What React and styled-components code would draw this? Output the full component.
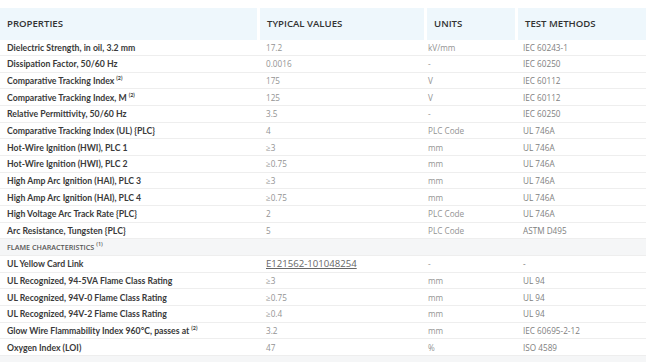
import React from 'react';
import styled, { createGlobalStyle } from 'styled-components';

const GlobalStyle = createGlobalStyle`
    body{
        margin: 0;
        background: #ffffff;
        font-family: "Open Sans", "Liberation Sans", sans-serif;
    }
`

const StyledSheet = styled.div`
    padding-top: 8px;
    width: 646px;
`

const Row = styled.div`
    display: grid;
    grid-template-columns: 257px 164px 88px 128px;
    column-gap: 3px;
    height: ${props => props.head ? '31.5px' : '16.67px'};
    align-items: center;
    background: ${props => props.head ? '#eef7fc' : props.section ? '#f5f6f7' : '#ffffff'};
    border-bottom: ${props => props.head ? 'none' : '1px solid #eeeeee'};
    box-sizing: border-box;
`

const HeadCell = styled.div`
    height: 100%;
    display: flex;
    align-items: center;
    padding-left: 7px;
    font-size: 9.6px;
    font-weight: 600;
    color: #333;
    background: #eef7fc;
    box-shadow: 3px 0 0 #ffffff;
`

const Prop = styled.div`
    padding-left: 7px;
    font-family: Lato, "Open Sans", sans-serif;
    font-size: 8.7px;
    font-weight: 700;
    color: #3a3a3a;
    white-space: nowrap;
    sup{
        font-size: 5.4px;
        margin-left: 2px;
        vertical-align: 4px;
        line-height: 0;
    }
`

const Section = styled(Prop)`
    font-family: "Open Sans", sans-serif;
    font-size: 7.2px;
    font-weight: 600;
    color: #555;
    grid-column: 1 / -1;
`

const Val = styled.div`
    padding-left: ${props => props.unit ? '1px' : props.method ? '5px' : '6px'};
    font-size: 8.2px;
    font-weight: 400;
    color: ${props => props.method ? '#808080' : '#939393'};
    white-space: nowrap;
`

const Link = styled.a`
    padding-left: 6px;
    font-size: 9.6px;
    color: #666;
    text-decoration: underline;
    text-underline-offset: 1px;
    white-space: nowrap;
`

const Footer = styled.div`
    height: 8px;
    background: #f5f6f7;
`

const Sup = ({ n }) => <sup>({n})</sup>;

const rows = [
    ['Dielectric Strength, in oil, 3.2 mm', null, '17.2', 'kV/mm', 'IEC 60243-1'],
    ['Dissipation Factor, 50/60 Hz', null, '0.0016', '-', 'IEC 60250'],
    ['Comparative Tracking Index', 2, '175', 'V', 'IEC 60112'],
    ['Comparative Tracking Index, M', 2, '125', 'V', 'IEC 60112'],
    ['Relative Permittivity, 50/60 Hz', null, '3.5', '-', 'IEC 60250'],
    ['Comparative Tracking Index (UL) {PLC}', null, '4', 'PLC Code', 'UL 746A'],
    ['Hot-Wire Ignition (HWI), PLC 1', null, '≥3', 'mm', 'UL 746A'],
    ['Hot-Wire Ignition (HWI), PLC 2', null, '≥0.75', 'mm', 'UL 746A'],
    ['High Amp Arc Ignition (HAI), PLC 3', null, '≥3', 'mm', 'UL 746A'],
    ['High Amp Arc Ignition (HAI), PLC 4', null, '≥0.75', 'mm', 'UL 746A'],
    ['High Voltage Arc Track Rate {PLC}', null, '2', 'PLC Code', 'UL 746A'],
    ['Arc Resistance, Tungsten {PLC}', null, '5', 'PLC Code', 'ASTM D495'],
];

const flame = [
    ['UL Recognized, 94-5VA Flame Class Rating', null, '≥3', 'mm', 'UL 94'],
    ['UL Recognized, 94V-0 Flame Class Rating', null, '≥0.75', 'mm', 'UL 94'],
    ['UL Recognized, 94V-2 Flame Class Rating', null, '≥0.4', 'mm', 'UL 94'],
    ['Glow Wire Flammability Index 960°C, passes at', 2, '3.2', 'mm', 'IEC 60695-2-12'],
    ['Oxygen Index (LOI)', null, '47', '%', 'ISO 4589'],
];

const DataRow = ({ r }) => (
    <Row>
        <Prop>{r[0]}{r[1] && <Sup n={r[1]} />}</Prop>
        <Val>{r[2]}</Val>
        <Val unit>{r[3]}</Val>
        <Val method>{r[4]}</Val>
    </Row>
);

const App = () => {
    return (
        <StyledSheet>
            <GlobalStyle />
            <Row head>
                <HeadCell>PROPERTIES</HeadCell>
                <HeadCell>TYPICAL VALUES</HeadCell>
                <HeadCell>UNITS</HeadCell>
                <HeadCell>TEST METHODS</HeadCell>
            </Row>
            {rows.map((r) => <DataRow key={r[0]} r={r} />)}
            <Row section>
                <Section>FLAME CHARACTERISTICS<Sup n={1} /></Section>
            </Row>
            <Row>
                <Prop>UL Yellow Card Link</Prop>
                <Link href="#">E121562-101048254</Link>
                <Val unit>-</Val>
                <Val method>-</Val>
            </Row>
            {flame.map((r) => <DataRow key={r[0]} r={r} />)}
            <Footer />
        </StyledSheet>
    );
}

export default App;
